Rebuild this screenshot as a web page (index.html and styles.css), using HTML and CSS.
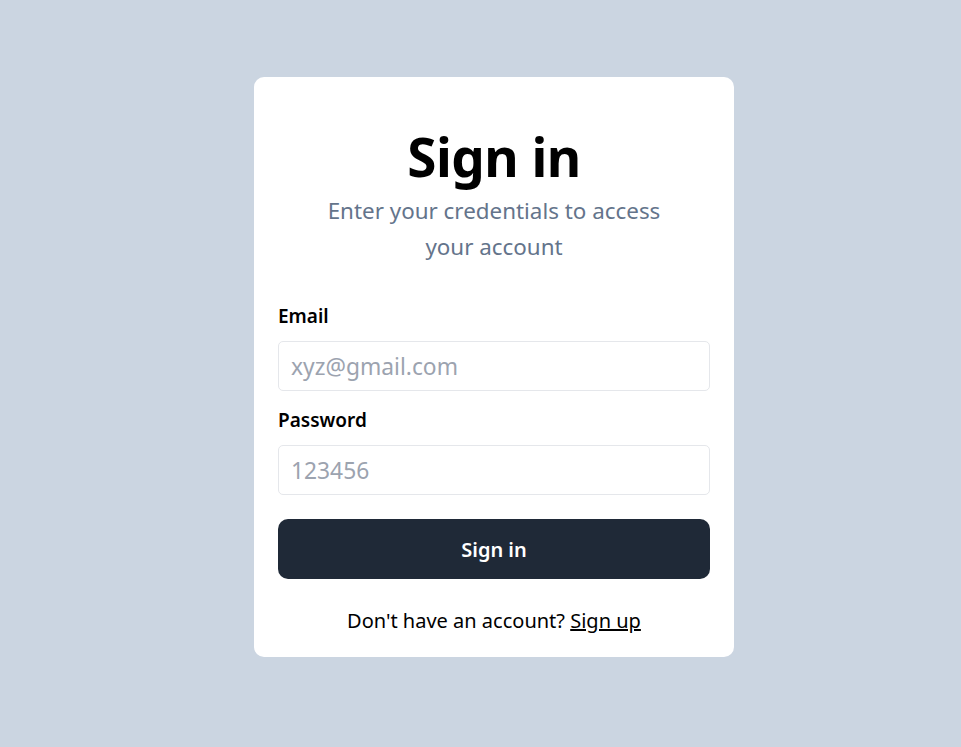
FILE: index.html
```html
<!DOCTYPE html>
<html>
<head>
<meta charset="utf-8">
<link rel="stylesheet" href="styles.css">
</head>
<body>
<div class="page">
  <div class="card">
    <h1 class="title">Sign in</h1>
    <p class="subtitle">Enter your credentials to access your account</p>
    <div class="form">
      <label class="label">Email</label>
      <input class="input" type="text" placeholder="xyz@gmail.com">
      <label class="label">Password</label>
      <input class="input" type="password" placeholder="123456">
      <button class="btn">Sign in</button>
    </div>
    <p class="footer">Don't have an account? <a class="link" href="#">Sign up</a></p>
  </div>
</div>
</body>
</html>
```
FILE: styles.css
```css
* { box-sizing: border-box; }
html, body { margin: 0; padding: 0; }
body {
  background: #cbd5e1;
  font-family: "Noto Sans", "Open Sans", sans-serif;
  color: #000;
}
.page {
  height: 747px;
  display: flex;
  justify-content: center;
  align-items: flex-start;
  padding-top: 77px;
  padding-left: 27px;
}
.card {
  width: 480px;
  height: 580px;
  background: #fff;
  border-radius: 10px;
  padding: 24px 24px 0;
  display: flex;
  flex-direction: column;
}
.title {
  margin: 24px 0 0;
  text-align: center;
  font-size: 53px;
  line-height: 64px;
  font-weight: 700;
  letter-spacing: -0.5px;
}
.subtitle {
  margin: 4px auto 0;
  width: 370px;
  text-align: center;
  color: #64748b;
  font-size: 22.4px;
  line-height: 36px;
}
.form {
  margin-top: 21px;
  display: flex;
  flex-direction: column;
}
.label {
  font-size: 19px;
  line-height: 28px;
  font-weight: 600;
  margin-top: 15px;
  margin-bottom: 11px;
}
.label:first-child { margin-top: 16px; }
.input {
  height: 50px;
  border: 1px solid #e5e7eb;
  border-radius: 5px;
  padding: 0 12px;
  font-family: inherit;
  font-size: 22.8px;
  color: #111;
  outline: none;
}
.input::placeholder { color: #9ca3af; }
.btn {
  margin-top: 24px;
  height: 60px;
  border: none;
  border-radius: 10px;
  background: #1f2937;
  color: #fff;
  font-family: inherit;
  font-size: 20px;
  font-weight: 600;
}
.footer {
  margin: 28px 0 0;
  text-align: center;
  font-size: 20px;
  line-height: 28px;
}
.link { color: #000; text-decoration: underline; }
```
